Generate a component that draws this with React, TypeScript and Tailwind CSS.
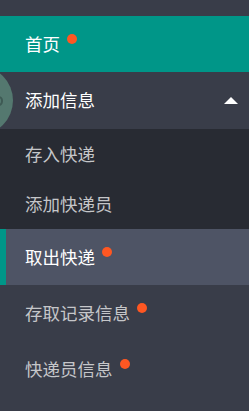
import React from 'react';

const font = { fontFamily: '"Noto Sans CJK SC", "Noto Sans", sans-serif' };

function Dot() {
  return <span className="ml-[7px] inline-block h-[10px] w-[10px] -translate-y-[5px] rounded-full bg-[#ff5722]" />;
}

export default function App() {
  return (
    <div className="h-[411px] w-[249px] overflow-hidden bg-[#393d49] text-[17.5px]" style={font}>
      <div className="h-4" />
      {/* 首页 - active */}
      <div className="flex h-14 items-center bg-[#009688] pl-[25px] text-white">
        <span>首页</span>
        <Dot />
      </div>

      {/* 添加信息 - expanded group */}
      <div className="relative flex h-[57px] items-center overflow-hidden pl-[25px] pr-[11px] text-white">
        <span className="absolute left-[-22px] top-[-6px] h-[69px] w-[35px] rounded-r-full bg-[#54786f]" />
        <span className="absolute left-[-6px] top-[24px] h-[10px] w-[9px] rounded-full border-2 border-[#3e5a54]" />
        <span className="relative">添加信息</span>
        <span className="ml-auto h-0 w-0 border-x-[7px] border-b-[7px] border-x-transparent border-b-white" />
      </div>
      <div className="bg-[#282b33] text-[#c5c6c9]">
        <div className="flex h-[50px] items-center pl-[25px]">存入快递</div>
        <div className="flex h-[50px] items-center pl-[25px]">添加快递员</div>
      </div>

      {/* 取出快递 - selected */}
      <div className="flex h-14 items-center border-l-[6px] border-[#009688] bg-[#4e5465] pl-[19px] text-white">
        <span>取出快递</span>
        <Dot />
      </div>

      <div className="flex h-14 items-center pl-[25px] text-[#c5c6c9]">
        <span>存取记录信息</span>
        <Dot />
      </div>
      <div className="flex h-14 items-center pl-[25px] text-[#c5c6c9]">
        <span>快递员信息</span>
        <Dot />
      </div>
    </div>
  );
}
